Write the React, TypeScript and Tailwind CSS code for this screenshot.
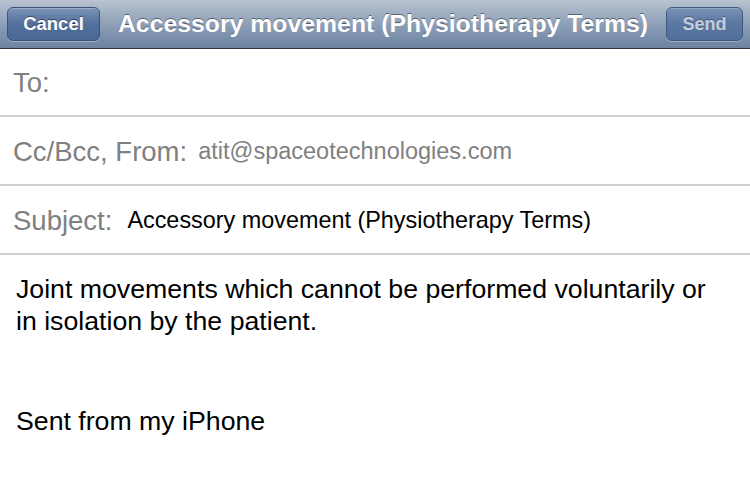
import React from "react";

export default function App() {
  const font = { fontFamily: '"Liberation Sans", Arial, Helvetica, sans-serif' };
  return (
    <div className="w-[750px] h-[500px] bg-white overflow-hidden" style={font}>
      <div className="h-[49px] flex items-center justify-between px-[7px] bg-gradient-to-b from-[#b9c3d1] via-[#8e9fb7] to-[#6c83a2] border-b border-[#2d3642]">
        <button className="w-[93px] h-[34px] rounded-[6px] border border-[#3a5377] bg-gradient-to-b from-[#7b93b6] via-[#52709b] to-[#4a6895] shadow-[inset_0_1px_0_rgba(255,255,255,0.25),0_1px_0_rgba(255,255,255,0.3)] text-white font-bold text-[18.5px] [text-shadow:0_-1px_0_rgba(0,0,0,0.45)]">
          Cancel
        </button>
        <div className="text-white font-bold text-[24.8px] [text-shadow:0_-1px_0_rgba(0,0,0,0.45)]">
          Accessory movement (Physiotherapy Terms)
        </div>
        <button className="w-[77px] h-[34px] rounded-[6px] border border-[#3f5a80] bg-gradient-to-b from-[#7a92b4] via-[#5a779f] to-[#51709b] shadow-[inset_0_1px_0_rgba(255,255,255,0.2),0_1px_0_rgba(255,255,255,0.3)] text-[#c3cedd] font-bold text-[18px] [text-shadow:0_-1px_0_rgba(0,0,0,0.3)]">
          Send
        </button>
      </div>
      <div className="h-[68px] flex items-center pt-[2px] px-[13px] border-b-2 border-[#d0d0d0]">
        <span className="text-[#808080] text-[27.5px]">To:</span>
      </div>
      <div className="h-[69px] flex items-center pt-[3px] px-[13px] border-b-2 border-[#d0d0d0]">
        <span className="text-[#808080] text-[27.5px]">Cc/Bcc, From:</span>
        <span className="text-[#808080] text-[23.5px] ml-[11px]">atit@spaceotechnologies.com</span>
      </div>
      <div className="h-[69px] flex items-center pt-[3px] px-[13px] border-b-2 border-[#d0d0d0]">
        <span className="text-[#808080] text-[27.5px]">Subject:</span>
        <span className="text-black text-[23.4px] ml-[15px]">Accessory movement (Physiotherapy Terms)</span>
      </div>
      <div className="px-[16px] pt-[18px] text-black text-[26.7px] leading-[32px]">
        <p className="whitespace-nowrap">
          Joint movements which cannot be performed voluntarily or
          <br />
          in isolation by the patient.
        </p>
        <p className="mt-[68px]">Sent from my iPhone</p>
      </div>
    </div>
  );
}
